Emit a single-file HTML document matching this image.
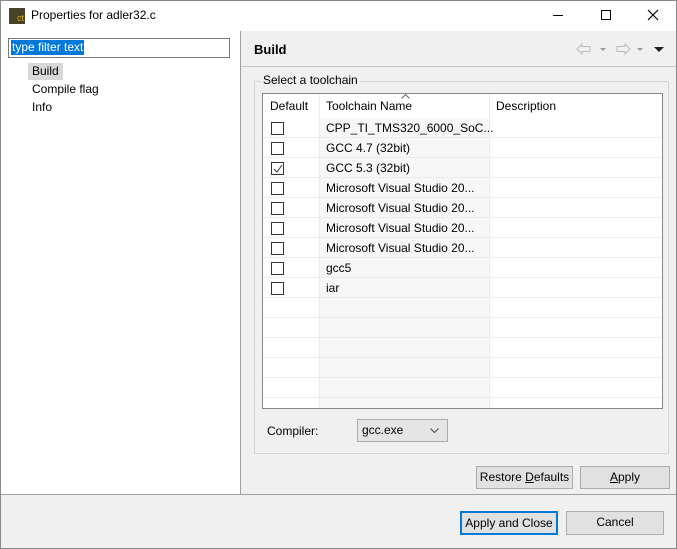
<!DOCTYPE html><html><head><style>
*{box-sizing:border-box;margin:0;padding:0}
body{width:677px;height:549px;position:relative;font-family:"Liberation Sans","Noto Sans CJK KR",sans-serif;font-size:12px;color:#000;background:#f0f0f0;overflow:hidden}
.a{position:absolute}
.btn{position:absolute;background:#e1e1e1;border:1px solid #adadad;text-align:center;line-height:21px;font-size:12px}
.cb{position:absolute;left:271px;width:13px;height:13px;border:1px solid #333;background:#fff}
</style></head><body>
<div class="a" style="left:0;top:0;width:677px;height:549px;border:1px solid #888"></div>
<div class="a" style="left:1px;top:1px;width:675px;height:30px;background:#fff"></div>
<div class="a" style="left:9px;top:8px;width:16px;height:16px;background:#4a4228;color:#d9b000;font-size:9px;line-height:20px;text-align:right;padding-right:1px">ct</div>
<div class="a" style="left:31px;top:8px;font-size:12px">Properties for adler32.c</div>
<div class="a" style="left:553px;top:15px;width:10px;height:1px;background:#000"></div>
<div class="a" style="left:601px;top:10px;width:10px;height:10px;border:1px solid #000"></div>
<svg class="a" style="left:647px;top:9px" width="12" height="12"><path d="M1 1L11 11M11 1L1 11" stroke="#000" stroke-width="1.2"/></svg>
<div class="a" style="left:1px;top:31px;width:239px;height:463px;background:#fff"></div>
<div class="a" style="left:240px;top:31px;width:1px;height:463px;background:#a0a0a0"></div>
<div class="a" style="left:8px;top:38px;width:222px;height:20px;border:1px solid #7a7a7a;background:#fff"></div>
<div class="a" style="left:11px;top:40px;height:15px;background:#0078d7;color:#fff;line-height:15px;padding:0 1px">type filter text</div>
<div class="a" style="left:28px;top:63px;width:35px;height:17px;background:#d9d9d9"></div>
<div class="a" style="left:32px;top:64px">Build</div>
<div class="a" style="left:32px;top:82px">Compile flag</div>
<div class="a" style="left:32px;top:100px">Info</div>
<div class="a" style="left:254px;top:42px;font-weight:bold;font-size:13px">Build</div>
<svg class="a" style="left:576px;top:42px" width="92" height="14">
<path d="M1 7L6 2V4.5H14V9.5H6V12Z" fill="none" stroke="#bbb"/>
<path d="M24 6H30L27 9Z" fill="#999"/>
<path d="M54 7L49 2V4.5H41V9.5H49V12Z" fill="none" stroke="#bbb"/>
<path d="M61 6H67L64 9Z" fill="#999"/>
<path d="M78 5H88L83 10Z" fill="#222"/>
</svg>
<div class="a" style="left:241px;top:66px;width:435px;height:1px;background:#c8c8c8"></div>
<div class="a" style="left:254px;top:81px;width:415px;height:373px;border:1px solid #d5d5d5"></div>
<div class="a" style="left:261px;top:73px;background:#f0f0f0;padding:0 2px">Select a toolchain</div>
<div class="a" style="left:262px;top:93px;width:401px;height:316px;border:1px solid #828790;background:#fff"></div>
<div class="a" style="left:320px;top:118px;width:170px;height:290px;background:#f7f7f7"></div>
<div class="a" style="left:319px;top:94px;width:1px;height:314px;background:#eaeaea"></div>
<div class="a" style="left:489px;top:94px;width:1px;height:314px;background:#eaeaea"></div>
<div class="a" style="left:270px;top:99px">Default</div>
<div class="a" style="left:326px;top:99px">Toolchain Name</div>
<svg class="a" style="left:401px;top:94px" width="9" height="5"><path d="M0.5 4.5L4.5 0.5L8.5 4.5" fill="none" stroke="#666"/></svg>
<div class="a" style="left:496px;top:99px">Description</div>
<div id="rows"></div>
<script>
var n=["CPP_TI_TMS320_6000_SoC...","GCC 4.7 (32bit)","GCC 5.3 (32bit)","Microsoft Visual Studio 20...","Microsoft Visual Studio 20...","Microsoft Visual Studio 20...","Microsoft Visual Studio 20...","gcc5","iar"],h="";
for(var i=0;i<15;i++){var y=118+i*20;h+='<div class="a" style="left:263px;top:'+(y+19)+'px;width:399px;height:1px;background:#ececec"></div>';
if(i<9){h+='<div class="cb" style="top:'+(y+4)+'px">'+(i==2?'<svg style="position:absolute;left:1px;top:1px" width="10" height="10"><path d="M1 5L4 8L9 1" fill="none" stroke="#333"/></svg>':'')+'</div><div class="a" style="left:326px;top:'+(y+3)+'px">'+n[i]+'</div>';}}
document.getElementById('rows').innerHTML=h;
</script>
<div class="a" style="left:267px;top:424px">Compiler:</div>
<div class="a" style="left:357px;top:419px;width:91px;height:23px;border:1px solid #acacac;background:#e5e5e5;padding:3px 4px">gcc.exe<svg style="position:absolute;right:8px;top:8px" width="9" height="5"><path d="M0.5 0.5L4.5 4.5L8.5 0.5" fill="none" stroke="#444"/></svg></div>
<div class="btn" style="left:476px;top:466px;width:97px;height:23px">Restore <u>D</u>efaults</div>
<div class="btn" style="left:580px;top:466px;width:90px;height:23px"><u>A</u>pply</div>
<div class="a" style="left:1px;top:494px;width:675px;height:1px;background:#a0a0a0"></div>
<div class="btn" style="left:460px;top:511px;width:98px;height:24px;border:2px solid #0078d7;line-height:20px">Apply and Close</div>
<div class="btn" style="left:566px;top:511px;width:98px;height:24px">Cancel</div>
</body></html>
